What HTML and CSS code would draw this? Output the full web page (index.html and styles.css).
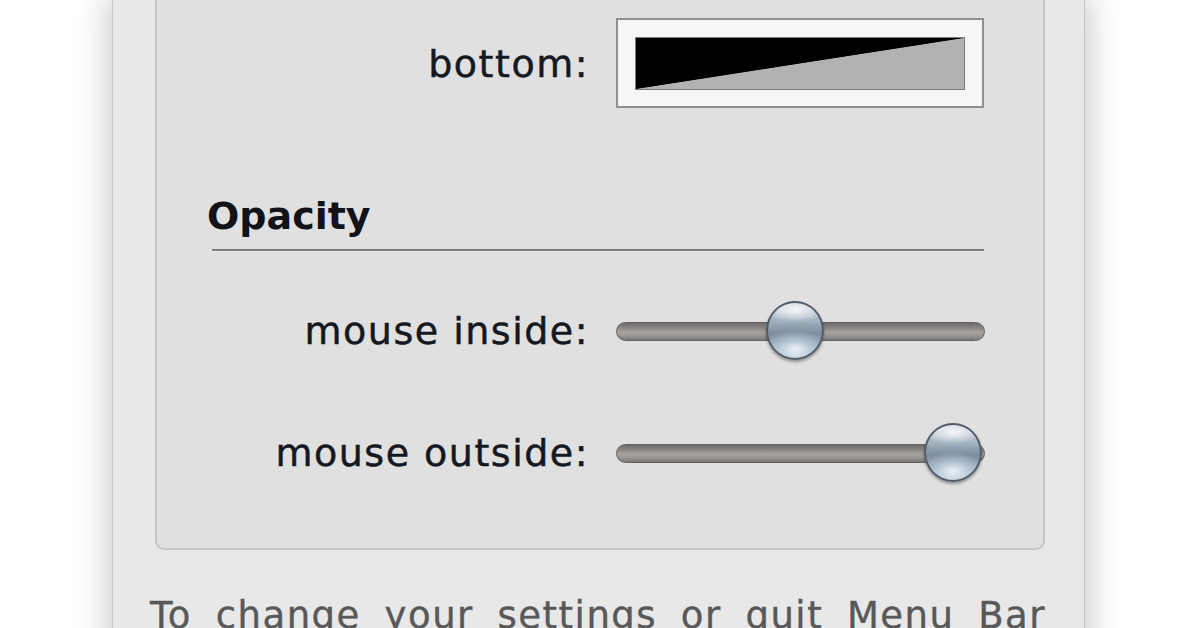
FILE: index.html
```html
<!DOCTYPE html>
<html lang="en">
<head>
<meta charset="utf-8">
<title>Menu Bar Preferences</title>
<link rel="stylesheet" href="styles.css">
</head>
<body>
<div class="page">
  <div class="window">
    <div class="group">
      <div class="row row-swatch">
        <span class="label">bottom:</span>
        <div class="swatch"><div class="swatch-fill"></div></div>
      </div>
      <div class="heading">Opacity</div>
      <div class="separator"></div>
      <div class="row row-slider first">
        <span class="label">mouse inside:</span>
        <div class="slider"><div class="track"></div><div class="knob" style="--v: 0.482"></div></div>
      </div>
      <div class="row row-slider second">
        <span class="label">mouse outside:</span>
        <div class="slider"><div class="track"></div><div class="knob" style="--v: 0.99"></div></div>
      </div>
    </div>
    <p class="note">To change your settings or quit Menu Bar</p>
  </div>
</div>
</body>
</html>
```
FILE: styles.css
```css
html, body {
  margin: 0;
  padding: 0;
  background: #ffffff;
}

.page {
  width: 1200px;
  height: 628px;
  overflow: hidden;
  background: #ffffff;
  font-family: "DejaVu Sans", "Liberation Sans", sans-serif;
}

.window {
  box-sizing: border-box;
  width: 973px;
  height: 700px;
  margin-left: 112px;
  background: #e8e8e8;
  border-left: 1px solid #c6c6c6;
  border-right: 1px solid #c6c6c6;
  box-shadow: 0 0 30px 4px rgba(0, 0, 0, 0.22);
  display: flex;
  flex-direction: column;
}

.group {
  margin: -20px 39px 0 42px;
  padding: 36px 0 65px 0;
  background: #e0e0e0;
  border: 2px solid #c6c6c6;
  border-radius: 9px;
  display: flex;
  flex-direction: column;
}

.row {
  display: grid;
  grid-template-columns: 432px 369px;
  column-gap: 27px;
  align-items: center;
}

.label {
  text-align: right;
  font-size: 38px;
  letter-spacing: 1.5px;
  color: #141820;
  line-height: normal;
  -webkit-text-stroke: 0.5px #141820;
}

.row-swatch {
  height: 90px;
}

.row-swatch .label {
  padding-top: 1px;
}

.swatch {
  box-sizing: border-box;
  width: 368px;
  height: 90px;
  padding: 17px 17px 16px 17px;
  border: 2px solid #909090;
  background: #f6f6f6;
}

.swatch-fill {
  box-sizing: border-box;
  width: 100%;
  height: 100%;
  border: 1px solid #7a7a7a;
  background: linear-gradient(to bottom right, #000000 49.6%, #b2b2b2 50.4%);
}

.heading {
  margin: 86px 0 0 50px;
  font-size: 38px;
  font-weight: bold;
  line-height: 44px;
  color: #111318;
}

.separator {
  margin: 11px 0 0 55px;
  width: 772px;
  height: 2px;
  background: #7e7e7e;
  border-bottom: 1px solid #ececec;
}

.row-slider {
  height: 60px;
}

.row-slider.first {
  margin-top: 49px;
}

.row-slider.second {
  margin-top: 62px;
}

.slider {
  position: relative;
  height: 60px;
  display: flex;
  align-items: center;
}

.track {
  box-sizing: border-box;
  width: 100%;
  height: 19px;
  border-radius: 10px;
  border: 1px solid #626262;
  background: linear-gradient(to bottom, #6c6968 0%, #8c8886 30%, #a6a2a0 55%, #9a9694 75%, #7a7675 100%);
}

.knob {
  position: absolute;
  top: 0;
  left: calc(var(--v) * (100% - 58px));
  box-sizing: border-box;
  width: 58px;
  height: 59px;
  border-radius: 50%;
  border: 2px solid #525c67;
  background:
    radial-gradient(ellipse 60% 35% at 50% 84%, rgba(238, 245, 251, 0.95) 0%, rgba(200, 215, 228, 0.6) 50%, rgba(200, 215, 228, 0) 100%),
    radial-gradient(ellipse 55% 22% at 50% 13%, rgba(255, 255, 255, 0.85) 0%, rgba(255, 255, 255, 0) 100%),
    linear-gradient(to bottom, #cfd8e1 0%, #a2b1bf 33%, #7b8d9f 55%, #93a4b5 75%, #c2d0dc 100%);
  box-shadow: 0 2px 3px rgba(0, 0, 0, 0.35);
}

.note {
  margin: 44px 38px 0 37px;
  font-size: 37px;
  letter-spacing: 1.5px;
  color: #585858;
  line-height: normal;
  text-align: justify;
  text-align-last: justify;
  -webkit-text-stroke: 0.4px #585858;
}
```
